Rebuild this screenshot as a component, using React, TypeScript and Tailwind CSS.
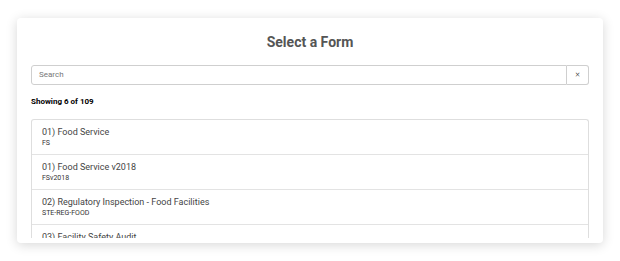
import React from "react";

const items = [
  { name: "01) Food Service", code: "FS" },
  { name: "01) Food Service v2018", code: "FSv2018" },
  { name: "02) Regulatory Inspection - Food Facilities", code: "STE-REG-FOOD" },
  { name: "03) Facility Safety Audit", code: "FSA" },
];

export default function App() {
  return (
    <div className="w-[620px] h-[261px] bg-white pt-[18px] pl-[17px]" style={{ fontFamily: "Roboto, 'Liberation Sans', sans-serif" }}>
      <div className="w-[586px] h-[225px] bg-white rounded-[4px] shadow-[0_2px_12px_rgba(0,0,0,0.16)] px-[14px] pt-[16px] pb-[5px] flex flex-col">
        <div className="h-[16px] leading-[16px] text-center text-[14px] font-bold text-[#555]">Select a Form</div>
        <div className="mt-[15px] flex h-[20px]">
          <div className="flex-1 border border-[#cfcfcf] rounded-l-[3px] flex items-center pl-[7px] text-[8px] text-[#777]">Search</div>
          <div className="w-[22px] border border-l-0 border-[#cfcfcf] rounded-r-[3px] flex items-center justify-center text-[9px] font-light text-[#333]">×</div>
        </div>
        <div className="mt-[12px] h-[10px] leading-[10px] text-[8px] font-bold text-black">Showing 6 of 109</div>
        <div className="mt-[12px] h-[119px] overflow-hidden border border-[#dedede] border-b-0 rounded-t-[3px]">
          {items.map((it) => (
            <div key={it.code} className="border-b border-[#e3e3e3] pl-[10px] pt-[7px] pb-[6px]">
              <div className="h-[11px] leading-[11px] text-[9px] text-[#444]">{it.name}</div>
              <div className="h-[10px] leading-[10px] text-[7px] text-[#333]">{it.code}</div>
            </div>
          ))}
        </div>
      </div>
    </div>
  );
}
